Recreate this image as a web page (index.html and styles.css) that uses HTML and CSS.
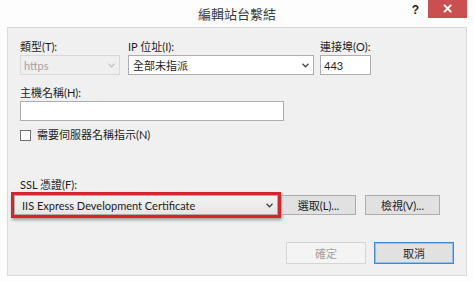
FILE: index.html
```html
<!DOCTYPE html>
<html lang="zh-Hant">
<head>
<meta charset="utf-8">
<title>編輯站台繫結</title>
<link rel="stylesheet" href="styles.css">
</head>
<body>
<div class="window">
  <div class="titlebar">
    <div class="tb-left"></div>
    <div class="title">編輯站台繫結</div>
    <div class="tb-right">
      <span class="help">?</span>
      <span class="close">×</span>
    </div>
  </div>
  <div class="panel">
    <div class="row1">
      <div class="field f-type">
        <div class="label">類型(T):</div>
        <div class="combo disabled"><span>https</span>
          <svg class="chev" width="7" height="5" viewBox="0 0 7 5"><path d="M0.5 0.8 L3.5 3.8 L6.5 0.8" fill="none" stroke="#c4c4c4" stroke-width="1.3"/></svg>
        </div>
      </div>
      <div class="field f-ip">
        <div class="label">IP 位址(I):</div>
        <div class="combo edit"><span>全部未指派</span>
          <svg class="chev" width="7" height="5" viewBox="0 0 7 5"><path d="M0.5 0.8 L3.5 3.8 L6.5 0.8" fill="none" stroke="#444" stroke-width="1.3"/></svg>
        </div>
      </div>
      <div class="field f-port">
        <div class="label">連接埠(O):</div>
        <div class="textbox">443</div>
      </div>
    </div>
    <div class="label host-label">主機名稱(H):</div>
    <div class="textbox host"></div>
    <div class="check-row">
      <span class="checkbox"></span>
      <span class="check-text">需要伺服器名稱指示(N)</span>
    </div>
    <div class="label ssl-label">SSL 憑證(F):</div>
    <div class="cert-row">
      <div class="highlight">
        <div class="combo cert"><span>IIS Express Development Certificate</span>
          <svg class="chev" width="7" height="5" viewBox="0 0 7 5"><path d="M0.5 0.8 L3.5 3.8 L6.5 0.8" fill="none" stroke="#444" stroke-width="1.3"/></svg>
        </div>
      </div>
      <div class="btn small">選取(L)...</div>
      <div class="btn small">檢視(V)...</div>
    </div>
    <div class="bottom-row">
      <div class="btn big disabled">確定</div>
      <div class="btn big default">取消</div>
    </div>
  </div>
</div>
</body>
</html>
```
FILE: styles.css
```css
html, body {
  margin: 0;
  padding: 0;
  background: #fdfdfd;
}
body {
  width: 474px;
  height: 282px;
  overflow: hidden;
  font-family: "Lato", "Noto Sans CJK TC", sans-serif;
  font-size: 11px;
  color: #1e1e1e;
}
.window {
  width: 474px;
  height: 282px;
  display: flex;
  flex-direction: column;
}
.titlebar {
  height: 27px;
  display: grid;
  grid-template-columns: 1fr auto 1fr;
  align-items: start;
  padding-right: 7px;
}
.title {
  font-family: "Noto Sans CJK TC", sans-serif;
  font-size: 13px;
  color: #3a3a3a;
  line-height: 16px;
  padding-top: 6px;
  padding-left: 7px;
}
.tb-right {
  display: flex;
  justify-content: flex-end;
  align-items: flex-start;
}
.help {
  font-family: "Liberation Sans", sans-serif;
  font-weight: bold;
  font-size: 12px;
  color: #222;
  line-height: 14px;
  padding-top: 3px;
  margin-right: 9px;
}
.close {
  width: 39px;
  height: 18px;
  background: #c9504e;
  color: #fff;
  font-family: "DejaVu Sans", sans-serif;
  font-size: 14px;
  line-height: 17px;
  text-align: center;
  font-weight: bold;
}
.panel {
  margin-left: 7px;
  width: 460px;
  height: 249px;
  box-sizing: border-box;
  background: #f0f0f0;
  border: 1px solid #dadada;
  padding: 11px 12px 11px 12px;
  display: flex;
  flex-direction: column;
  align-items: flex-start;
}
.label {
  line-height: 16px;
  height: 16px;
  white-space: nowrap;
}
.row1 {
  display: flex;
}
.f-type { width: 100px; }
.f-ip { width: 186px; margin-left: 8px; }
.f-port { width: 51px; margin-left: 6px; }
.combo, .textbox {
  height: 20px;
  box-sizing: border-box;
  border: 1px solid #abadb3;
  background: #fff;
  display: flex;
  align-items: center;
  padding-left: 4px;
  white-space: nowrap;
}
.combo {
  justify-content: space-between;
  padding-right: 4px;
}
.combo.disabled {
  background: #efefef;
  border-color: #d9d9d9;
  color: #a3a3a3;
  padding-left: 3px;
}
.textbox { padding-left: 3px; }
.host-label { margin-top: 10px; }
.host {
  width: 264px;
}
.check-row {
  margin-top: 6px;
  height: 16px;
  display: flex;
  align-items: center;
}
.checkbox {
  width: 11px;
  height: 11px;
  box-sizing: border-box;
  border: 1px solid #707070;
  background: #fff;
}
.check-text {
  margin-left: 6px;
  line-height: 16px;
}
.ssl-label { margin-top: 34px; }
.cert-row {
  margin-top: -1px;
  display: flex;
  align-items: center;
}
.highlight {
  margin-left: -9px;
  border: 3px solid #d8232a;
  box-shadow: 1px 2px 3px rgba(0, 0, 0, 0.35);
}
.combo.cert {
  width: 264px;
  background: linear-gradient(#f2f2f2, #e6e6e6);
  border-color: #acacac;
  padding-left: 7px;
  padding-right: 4px;
}
.btn {
  box-sizing: border-box;
  border: 1px solid #adadad;
  background: #e1e1e1;
  display: flex;
  align-items: center;
  justify-content: center;
  white-space: nowrap;
}
.btn.small {
  width: 75px;
  height: 20px;
}
.cert-row .btn:first-of-type { margin-left: 5px; }
.cert-row .btn + .btn { margin-left: 9px; }
.bottom-row {
  margin-top: auto;
  align-self: flex-end;
  display: flex;
  gap: 8px;
}
.btn.big {
  width: 80px;
  height: 22px;
}
.btn.disabled {
  background: #f4f4f4;
  border-color: #d5d5d5;
  color: #a3a3a3;
}
.btn.default {
  border-color: #3c8ad4;
  box-shadow: inset 0 0 0 1px #8fc0ec;
}
```
